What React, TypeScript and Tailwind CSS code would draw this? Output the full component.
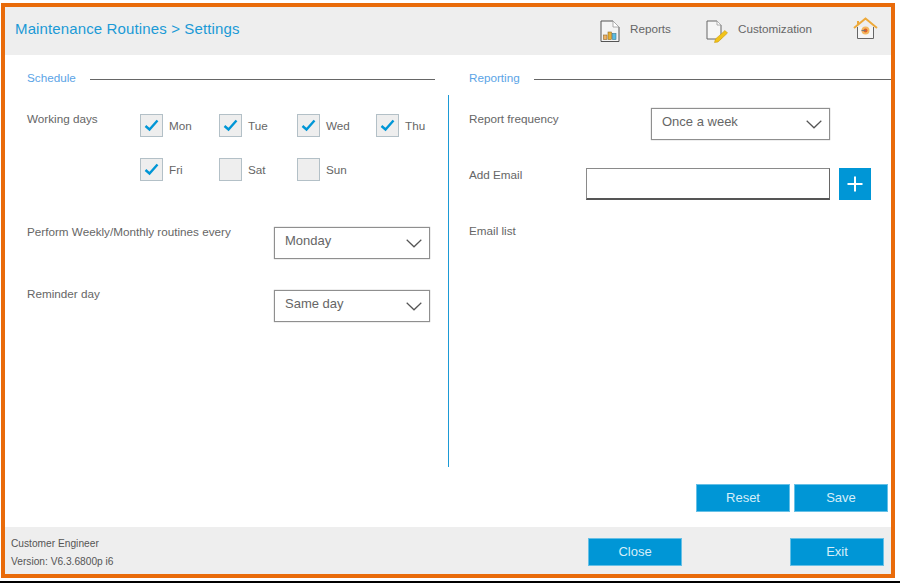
const font = { fontFamily: '"Liberation Sans", Arial, sans-serif' };

function Check({ label, checked }: { label: string; checked?: boolean }) {
  return (
    <div className="flex items-center h-[23px]">
      <div className="w-[23px] h-[23px] bg-[#eeeeee] border border-[#b3c0c7] flex items-center justify-center shrink-0">
        {checked && (
          <svg width="15" height="13" viewBox="0 0 15 13" fill="none">
            <path d="M1.5 7 L5.5 10.5 L13.5 1.5" stroke="#0096d6" strokeWidth="2.4" />
          </svg>
        )}
      </div>
      <span className="ml-[6px] text-[11.7px] text-[#666666] mt-[1px]">{label}</span>
    </div>
  );
}

function Select({ value, className }: { value: string; className: string }) {
  return (
    <div className={`h-[32px] bg-white border border-[#8f8f8f] flex items-center justify-between pl-[10px] pr-[7px] shadow-[0_0_1px_#999] ${className}`}>
      <span className="text-[13px] text-[#666666] -mt-[4px]">{value}</span>
      <svg width="16" height="9" viewBox="0 0 16 9" fill="none">
        <path d="M0.7 0.8 L8 7.8 L15.3 0.8" stroke="#555555" strokeWidth="1.2" />
      </svg>
    </div>
  );
}

function SectionTitle({ title, lineClass }: { title: string; lineClass: string }) {
  return (
    <div className="flex items-center h-[16px]">
      <span className="text-[11.7px] text-[#5ba4e6]">{title}</span>
      <div className={`h-px bg-[#666666] mt-[3px] ${lineClass}`} />
    </div>
  );
}

function Btn({ label, className }: { label: string; className: string }) {
  return (
    <button className={`w-[94px] h-[28px] bg-[#0096d6] border border-[#66c0e6] text-[13px] text-[#d6eef9] flex items-center justify-center ${className}`}>
      {label}
    </button>
  );
}

function ReportsIcon() {
  return (
    <svg width="20" height="23" viewBox="0 0 20 23" fill="none">
      <path d="M1 1 H13 L19 7 V21.5 H1 Z" fill="#f4f4f4" stroke="#555555" strokeWidth="1" />
      <path d="M13 1 V7 H19" fill="#ffffff" stroke="#9a9a9a" strokeWidth="0.8" />
      <rect x="3.5" y="15" width="3.5" height="4.5" fill="#f0b060" stroke="#8a6a30" strokeWidth="0.6" />
      <rect x="8" y="12" width="3.5" height="7.5" fill="#e8b030" stroke="#8a6a30" strokeWidth="0.6" />
      <rect x="12.5" y="13.5" width="3.5" height="6" fill="#5bbbe0" stroke="#3a7a90" strokeWidth="0.6" />
    </svg>
  );
}

function CustomIcon() {
  return (
    <svg width="22" height="23" viewBox="0 0 22 23" fill="none">
      <path d="M1 1 H11 L15 5 V19 H1 Z" fill="#f6f6f6" stroke="#666666" strokeWidth="1" />
      <path d="M11 1 V5 H15" fill="#ffffff" stroke="#9a9a9a" strokeWidth="0.8" />
      <path d="M19 10.5 L21.5 13 L12 22 L8.5 22.5 L9.5 19 Z" fill="#f2c318" stroke="#c99a10" strokeWidth="0.6" />
    </svg>
  );
}

function HomeIcon() {
  return (
    <svg width="25" height="23" viewBox="0 0 25 23" fill="none">
      <path d="M4.5 10 V21.5 H20.5 V10" fill="#f6f6f6" stroke="#666666" strokeWidth="1" />
      <path d="M1 11 L12.5 1.5 L24 11" fill="none" stroke="#eda93a" strokeWidth="2" />
      <path d="M5 4 V7" stroke="#eda93a" strokeWidth="2" />
      <circle cx="12.5" cy="13.5" r="4" fill="#f4b860" />
      <circle cx="12.5" cy="13.5" r="2" fill="#e0602a" />
      <path d="M8.5 13.5 H12.5" stroke="#777777" strokeWidth="1.2" />
    </svg>
  );
}

export default function App() {
  const row1 = [["Mon", true], ["Tue", true], ["Wed", true], ["Thu", true]] as const;
  const row2 = [["Fri", true], ["Sat", false], ["Sun", false]] as const;
  return (
    <div style={font} className="w-[900px] h-[583px] bg-white pt-[3px] pl-px overflow-hidden">
      <div className="w-[894px] h-[575px] border-4 border-[#e96b0a] flex flex-col">
        <header className="h-[48px] bg-[#eeeeee] flex items-center shrink-0">
          <h1 className="ml-[10px] w-[225px] shrink-0 whitespace-nowrap text-[15px] font-normal tracking-[0.13px] text-[#1b9ad6] -mt-[4px]">Maintenance Routines &gt; Settings</h1>
          <div className="ml-[360px] flex items-center"><ReportsIcon /></div>
          <span className="ml-[10px] w-[42px] text-[11.7px] text-[#666666] -mt-[4px]">Reports</span>
          <div className="ml-[34px] flex items-center"><CustomIcon /></div>
          <span className="ml-[10px] w-[74px] text-[11.7px] text-[#666666] -mt-[4px]">Customization</span>
          <div className="ml-[41px] flex items-center -mt-[6px]"><HomeIcon /></div>
        </header>

        <main className="flex-1 bg-white flex flex-col">
          <div className="flex h-[412px]">
            <section className="w-[443px] shrink-0 pl-[22px] pt-[15px]">
              <SectionTitle title="Schedule" lineClass="ml-[14px] w-[345px]" />
              <div className="flex mt-[28px]">
                <span className="w-[113px] shrink-0 text-[11.7px] text-[#666666] leading-[14px] -mt-[3px] pt-[1px]">Working days</span>
                <div className="flex flex-col gap-[21px]">
                  <div className="grid grid-cols-[79px_78px_79px_60px]">
                    {row1.map(([l, c]) => <Check key={l} label={l} checked={c} />)}
                  </div>
                  <div className="grid grid-cols-[79px_78px_79px_60px]">
                    {row2.map(([l, c]) => <Check key={l} label={l} checked={c} />)}
                  </div>
                </div>
              </div>
              <div className="flex mt-[46px] items-start">
                <span className="w-[247px] shrink-0 text-[11.7px] text-[#666666] leading-[14px] -mt-[2px]">Perform Weekly/Monthly routines every</span>
                <Select value="Monday" className="w-[156px]" />
              </div>
              <div className="flex mt-[31px] items-start">
                <span className="w-[247px] shrink-0 text-[11.7px] text-[#666666] leading-[14px] -mt-[3px]">Reminder day</span>
                <Select value="Same day" className="w-[156px]" />
              </div>
            </section>
            <section className="flex-1 flex flex-col pt-[15px]">
              <div className="pl-[21px]">
                <SectionTitle title="Reporting" lineClass="ml-[14px] flex-1" />
              </div>
              <div className="mt-[9px] h-[372px] border-l border-[#1b9ad6] pl-[20px]">
                <div className="flex items-start pt-[13px]">
                  <span className="w-[182px] shrink-0 text-[11.7px] text-[#666666] leading-[14px] mt-[4px]">Report frequency</span>
                  <Select value="Once a week" className="w-[179px]" />
                </div>
                <div className="flex items-start mt-[28px]">
                  <span className="w-[117px] shrink-0 text-[11.7px] text-[#666666] leading-[14px]">Add Email</span>
                  <div className="w-[244px] h-[32px] bg-white border border-[#8a8a8a] border-b-2 border-b-[#555555] border-r-[#666666]" />
                  <button className="ml-[9px] w-[32px] h-[32px] bg-[#0096d6] flex items-center justify-center">
                    <svg width="16" height="16" viewBox="0 0 16 16" fill="none">
                      <path d="M8 0.5 V15.5 M0.5 8 H15.5" stroke="#ffffff" strokeWidth="2" />
                    </svg>
                  </button>
                </div>
                <p className="mt-[24px] text-[11.7px] text-[#666666] leading-[14px]">Email list</p>
              </div>
            </section>
          </div>
          <div className="flex justify-end gap-[4px] pr-[3px] mt-[17px]">
            <Btn label="Reset" className="" />
            <Btn label="Save" className="" />
          </div>
        </main>

        <footer className="h-[47px] bg-[#eeeeee] flex items-center shrink-0">
          <div className="ml-[6px] text-[10.2px] leading-[18px] text-[#555555] w-[577px] mt-[5px]">
            <div>Customer Engineer</div>
            <div>Version: V6.3.6800p i6</div>
          </div>
          <Btn label="Close" className="mt-[2px]" />
          <Btn label="Exit" className="ml-[108px] mt-[2px]" />
        </footer>
      </div>
      <div className="mt-[3px] h-[2px] w-[900px] -ml-px bg-black" />
    </div>
  );
}
